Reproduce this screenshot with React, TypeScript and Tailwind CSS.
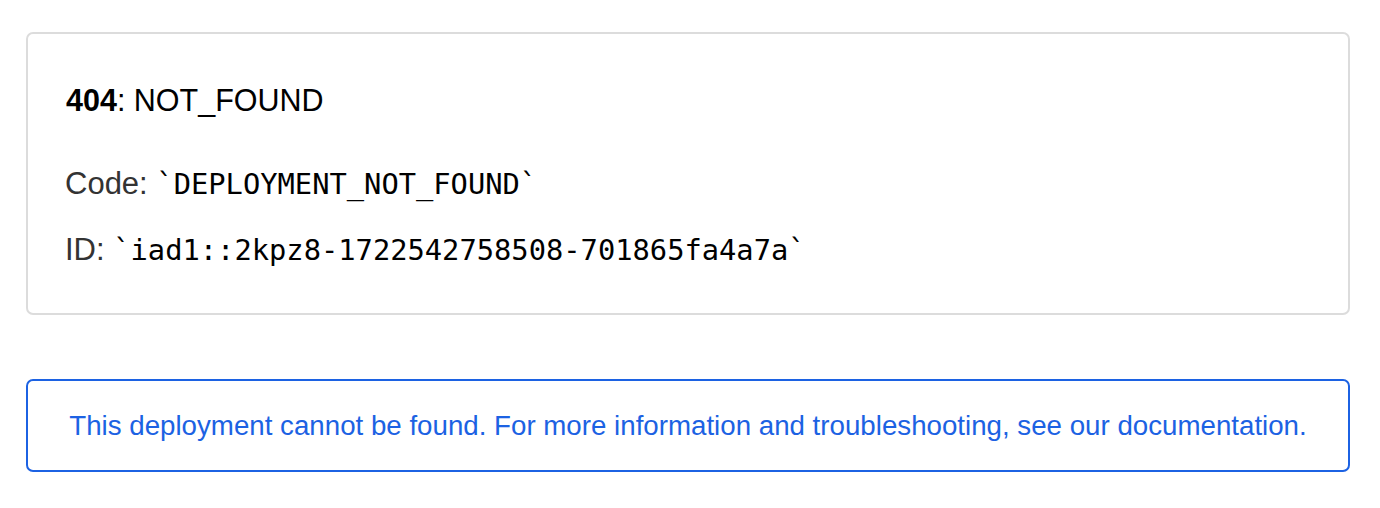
export default function App() {
  return (
    <div
      className="w-[1380px] h-[508px] bg-white pt-[32px] pl-[26px]"
      style={{ fontFamily: '"Liberation Sans", Arial, sans-serif' }}
    >
      <div className="w-[1324px] flex flex-col gap-[64px]">
        <div className="h-[283px] rounded-[7px] border-2 border-[#dcdcdc] pt-[51px]">
          <div className="pl-[38px] text-[30.5px] leading-[30px] text-black">
            <span className="font-bold">404</span>: NOT_FOUND
          </div>
          <div className="pl-[37px] mt-[55px] text-[31px] leading-[28px] text-[#333]">
            Code:{' '}
            <span
              className="text-black text-[28.75px]"
              style={{ fontFamily: '"DejaVu Sans Mono", monospace' }}
            >
              `DEPLOYMENT_NOT_FOUND`
            </span>
          </div>
          <div className="pl-[37px] mt-[38px] text-[31px] leading-[28px] text-[#333]">
            ID:{' '}
            <span
              className="text-black text-[28.75px]"
              style={{ fontFamily: '"DejaVu Sans Mono", monospace' }}
            >
              `iad1::2kpz8-1722542758508-701865fa4a7a`
            </span>
          </div>
        </div>
        <div className="h-[93px] rounded-[7px] border-2 border-[#1c62e3] flex items-center justify-center">
          <p className="text-[27.7px] leading-[28px] text-[#1c62e3]">
            This deployment cannot be found. For more information and troubleshooting, see our documentation.
          </p>
        </div>
      </div>
    </div>
  );
}
